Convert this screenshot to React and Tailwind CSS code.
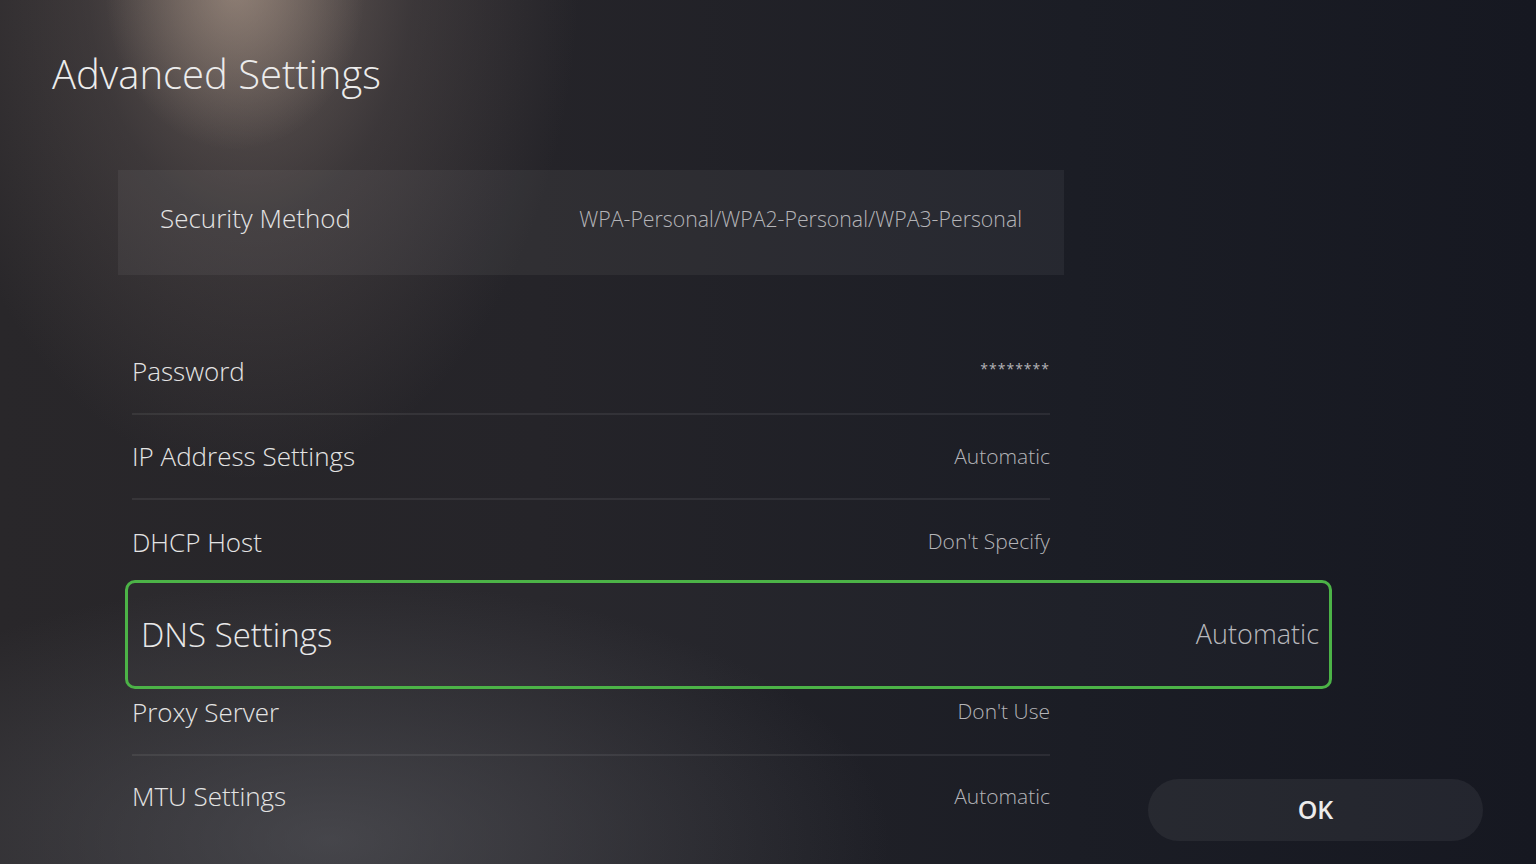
export default function App() {
  const font = { fontFamily: '"Open Sans", "Noto Sans", sans-serif' };
  return (
    <div
      className="w-[1536px] h-[864px] overflow-hidden bg-[#171921] bg-[radial-gradient(ellipse_130px_160px_at_235px_-10px,rgba(175,155,140,0.55),transparent),radial-gradient(ellipse_330px_520px_at_250px_-40px,rgba(150,132,122,0.6),rgba(110,98,95,0.3)_50%,transparent_100%),radial-gradient(ellipse_560px_260px_at_330px_840px,rgba(95,96,102,0.55),transparent),linear-gradient(90deg,#29272a_0%,#252429_35%,#1b1d25_70%,#161821_100%)] flex flex-col"
      style={font}
    >
      <div className="pl-[52px] pt-[48px] h-[170px]">
        <h1 className="text-[40px] leading-[52px] font-light text-[#ececec]">
          Advanced Settings
        </h1>
      </div>
      <div className="flex flex-1">
        <div className="ml-[118px] w-[946px] flex flex-col">
          <div className="h-[105px] bg-[rgba(255,255,255,0.05)] flex items-center justify-between pl-[42px] pr-[42px] pb-[8px]">
            <span className="text-[26px] font-light text-[#e4e4e4]">Security Method</span>
            <span className="text-[21.3px] font-light text-[#b4b4b8]">WPA-Personal/WPA2-Personal/WPA3-Personal</span>
          </div>
          <div className="h-[55px]" />
          <div className="ml-[14px] w-[918px] flex flex-col">
            <div className="h-[85px] flex items-center justify-between border-b-2 border-[rgba(255,255,255,0.07)]">
              <span className="text-[26px] font-light text-[#e4e4e4]">Password</span>
              <span className="text-[14px] text-[#b4b4b8] tracking-[1px] -mt-[6px]">********</span>
            </div>
            <div className="h-[85px] flex items-center justify-between border-b-2 border-[rgba(255,255,255,0.07)]">
              <span className="text-[26px] font-light text-[#e4e4e4]">IP Address Settings</span>
              <span className="text-[21px] font-light text-[#b4b4b8]">Automatic</span>
            </div>
            <div className="h-[80px] flex items-center justify-between pt-[4px]">
              <span className="text-[26px] font-light text-[#e4e4e4]">DHCP Host</span>
              <span className="text-[21px] font-light text-[#b4b4b8]">Don't Specify</span>
            </div>
            <div className="-ml-[7px] w-[1207px] h-[109px] rounded-[10px] border-[3px] border-[#4cb347] bg-[rgba(255,255,255,0.02)] flex items-center justify-between pl-[13px] pr-[10px]">
              <span className="text-[33px] font-light text-[#e8e8e8]">DNS Settings</span>
              <span className="text-[27px] font-light text-[#b8b8bc]">Automatic</span>
            </div>
            <div className="h-[67px] flex items-start justify-between pt-[4px] border-b-2 border-[rgba(255,255,255,0.07)]">
              <span className="text-[26px] font-light text-[#e4e4e4]">Proxy Server</span>
              <span className="text-[21px] font-light text-[#b4b4b8] pt-[3px]">Don't Use</span>
            </div>
            <div className="h-[85px] flex items-center justify-between pb-[4px]">
              <span className="text-[26px] font-light text-[#e4e4e4]">MTU Settings</span>
              <span className="text-[21px] font-light text-[#b4b4b8]">Automatic</span>
            </div>
          </div>
        </div>
        <div className="ml-[84px] w-[335px] flex flex-col justify-end pb-[23px]">
          <button className="h-[62px] w-full rounded-full bg-[rgba(255,255,255,0.06)] text-[25px] font-semibold text-[#ececec]">
            OK
          </button>
        </div>
      </div>
    </div>
  );
}
